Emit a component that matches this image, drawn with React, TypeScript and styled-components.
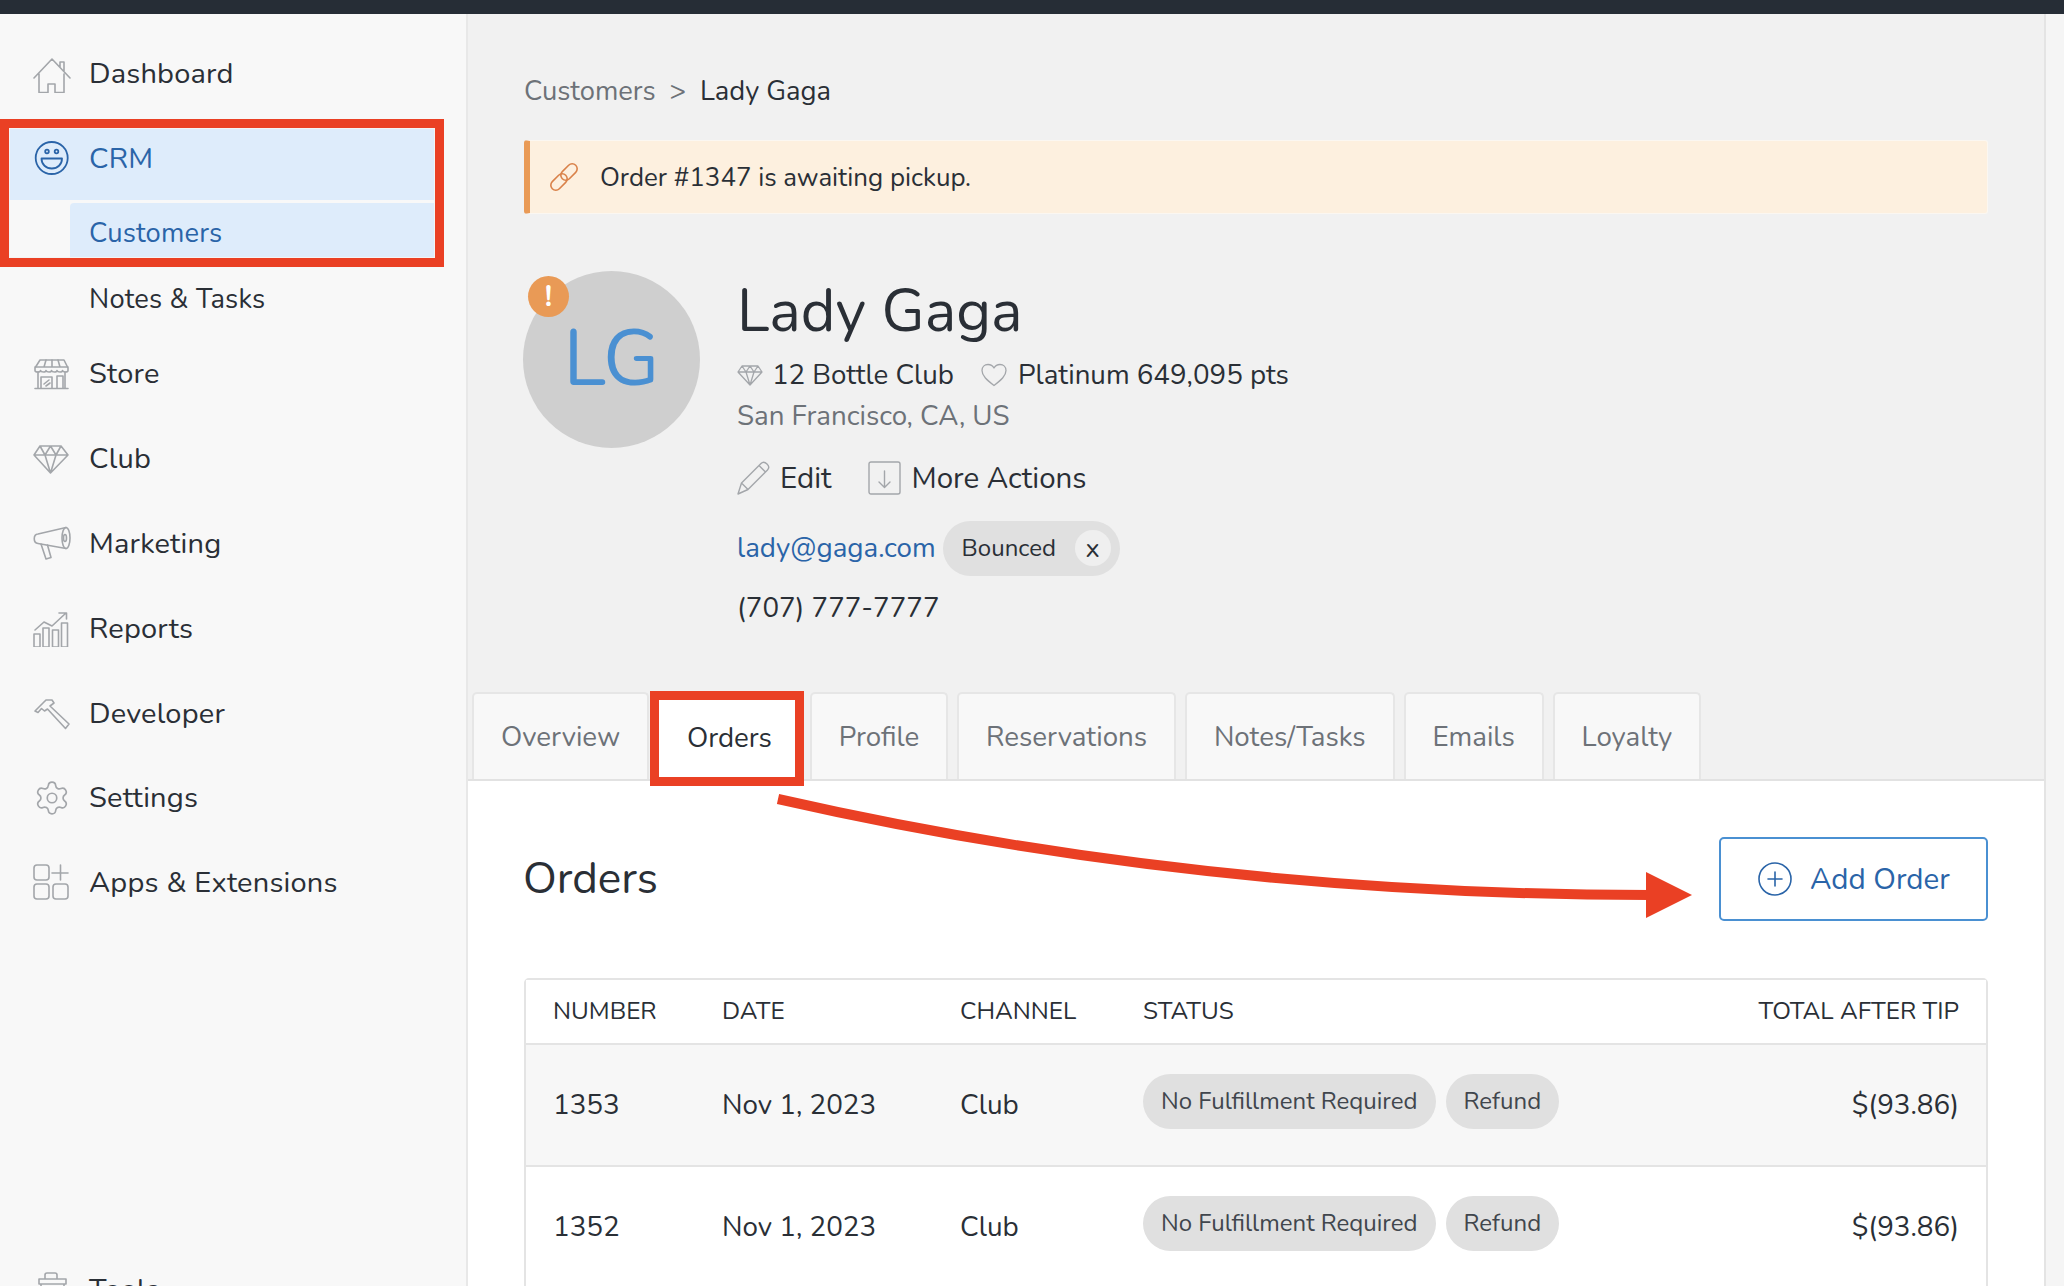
import React from "react";
import styled, { createGlobalStyle } from "styled-components";
import { Settings } from "lucide-react";

const GlobalStyle = createGlobalStyle`
  html, body {
    margin: 0;
    padding: 0;
    height: 100%;
    overflow: hidden;
    background: #f1f1f1;
  }
  * { box-sizing: border-box; }
  body {
    font-family: "Nunito", Lato, "Noto Sans", sans-serif;
    color: #2a2f36;
  }
`;

const Page = styled.div`
  position: relative;
  width: 2064px;
  height: 1286px;
  overflow: hidden;
  display: flex;
  flex-direction: column;
`;
const TopBar = styled.div`
  height: 14px;
  flex: none;
  background: #262d36;
`;
const Body = styled.div`
  flex: 1;
  min-height: 0;
  display: flex;
`;

/* sidebar */
const Sidebar = styled.nav`
  flex: none;
  width: 468px;
  height: 1318px;
  padding-top: 17px;
  background: #f8f8f8;
  border-right: 2px solid #e8e8e8;
  display: flex;
  flex-direction: column;
`;
const NavItem = styled.div<{ $h?: number }>`
  flex: none;
  height: ${(p) => p.$h ?? 84.8}px;
  padding-left: 33px;
  display: flex;
  align-items: center;
  gap: 18px;
  font-size: 29px;
  letter-spacing: 0.2px;
  svg {
    flex: none;
  }
`;
const Group = styled.div`
  position: relative;
  flex: none;
  width: 444px;
  margin-top: 12px;
`;
const GroupHead = styled(NavItem)`
  height: 72px;
  padding-bottom: 12px;
  background: #deecfb;
  color: #2a64a8;
`;
const SubItem = styled.div<{ $active?: boolean }>`
  flex: none;
  margin-left: 70px;
  padding-left: 19px;
  display: flex;
  align-items: center;
  font-size: 27.3px;
  letter-spacing: 0.2px;
  height: ${(p) => (p.$active ? 55 : 73.5)}px;
  margin-top: ${(p) => (p.$active ? 3 : 0)}px;
  padding-top: ${(p) => (p.$active ? 5 : 8)}px;
  border-top-left-radius: 4px;
  background: ${(p) => (p.$active ? "#deecfb" : "transparent")};
  color: ${(p) => (p.$active ? "#2a64a8" : "inherit")};
`;
const RedBox = styled.div`
  position: absolute;
  top: -9px;
  left: 0;
  right: 0;
  bottom: -9px;
  border: 9px solid #ea4024;
  box-shadow: inset 0 0 0 1px #f4f4f4;
  pointer-events: none;
`;
const BottomItem = styled(NavItem)`
  margin-top: auto;
`;

/* main column */
const Main = styled.main`
  flex: none;
  width: 1576px;
  display: flex;
  flex-direction: column;
`;
const Head = styled.header`
  padding: 59px 56px 65px;
`;
const Crumbs = styled.div`
  height: 36px;
  display: flex;
  align-items: center;
  gap: 14px;
  font-size: 27.3px;
  margin-bottom: 31px;
`;
const CrumbLink = styled.span`
  color: #6d7278;
`;
const Alert = styled.div`
  height: 74px;
  padding-left: 19px;
  display: flex;
  align-items: center;
  gap: 21px;
  font-size: 25.9px;
  background: #fdf0df;
  border: 1px solid #fbf7f1;
  border-left: 6px solid #e99a56;
  border-radius: 3px;
  margin-bottom: 57px;
`;
const Profile = styled.section`
  display: flex;
  gap: 37px;
  margin-left: -1px;
`;
const Avatar = styled.div`
  position: relative;
  flex: none;
  width: 177px;
  height: 177px;
  border-radius: 50%;
  background: #cfcfcf;
  color: #4a90d2;
  font-size: 78px;
  display: flex;
  align-items: center;
  justify-content: center;
`;
const AlertDot = styled.span`
  position: absolute;
  top: 5px;
  left: 5px;
  width: 41px;
  height: 41px;
  border-radius: 50%;
  background: #e99a56;
  color: #fff;
  font-size: 30px;
  font-weight: 700;
  display: flex;
  align-items: center;
  justify-content: center;
`;
const Info = styled.div`
  display: flex;
  flex-direction: column;
`;
const Name = styled.h1`
  margin: 11px 0 0;
  font-size: 59.5px;
  line-height: 60px;
  font-weight: 400;
`;
const InfoRow = styled.div<{ $top: number; $muted?: boolean; $size?: number }>`
  margin-top: ${(p) => p.$top}px;
  min-height: 36px;
  display: flex;
  align-items: center;
  font-size: ${(p) => p.$size ?? 27.7}px;
  color: ${(p) => (p.$muted ? "#6d7278" : "inherit")};
`;
const Inline = styled.span<{ $gap: number; $left?: number }>`
  display: inline-flex;
  align-items: center;
  gap: ${(p) => p.$gap}px;
  margin-left: ${(p) => p.$left ?? 0}px;
`;
const Email = styled.a`
  color: #2a64a8;
`;
const BouncedPill = styled.span`
  margin-left: 7px;
  width: 177px;
  height: 55px;
  padding: 0 9px 0 19px;
  border-radius: 28px;
  background: #e0e0e0;
  display: flex;
  align-items: center;
  justify-content: space-between;
  font-size: 24px;
`;
const PillClose = styled.span`
  width: 36px;
  height: 36px;
  border-radius: 50%;
  background: #efefef;
  font-size: 27px;
  display: flex;
  align-items: center;
  justify-content: center;
`;

/* tabs */
const Tabs = styled.div`
  height: 89px;
  padding-left: 4px;
  display: flex;
  gap: 9px;
  border-bottom: 2px solid #e2e2e2;
`;
const Tab = styled.div<{ $active?: boolean }>`
  position: relative;
  padding: 1px 26.9px 0;
  display: flex;
  align-items: center;
  font-size: 27.7px;
  background: ${(p) => (p.$active ? "#fff" : "#f8f8f8")};
  color: ${(p) => (p.$active ? "#2a2f36" : "#6d7278")};
  border: 2px solid ${(p) => (p.$active ? "#fff" : "#e6e6e6")};
  border-bottom: none;
  border-radius: 5px 5px 0 0;
  height: ${(p) => (p.$active ? 89 : 87)}px;
`;
const TabRedBox = styled.span`
  position: absolute;
  top: -3px;
  left: -10px;
  right: -5px;
  bottom: -5px;
  border: 9px solid #ea4024;
  pointer-events: none;
`;

/* orders panel */
const Panel = styled.section`
  flex: 1;
  padding: 56px 56px 0;
  background: #fff;
`;
const PanelHead = styled.div`
  height: 84px;
  display: flex;
  align-items: center;
  justify-content: space-between;
  margin-bottom: 57px;
`;
const PanelTitle = styled.h2`
  margin: 0 0 0 -1px;
  font-size: 44px;
  font-weight: 400;
`;
const AddButton = styled.button`
  width: 269px;
  height: 84px;
  padding: 0 0 0 37px;
  display: flex;
  align-items: center;
  gap: 18px;
  background: #fff;
  border: 2px solid #4a90d2;
  border-radius: 5px;
  color: #2a64a8;
  font-family: inherit;
  font-size: 29.5px;
`;
const TableBox = styled.div`
  border: 2px solid #e4e4e4;
  border-radius: 5px;
`;
const TableRow = styled.div<{ $head?: boolean; $shade?: boolean }>`
  display: grid;
  grid-template-columns: 169px 238px 183px 1fr auto;
  align-items: center;
  height: ${(p) => (p.$head ? 65 : 122)}px;
  padding: 0 27px;
  font-size: ${(p) => (p.$head ? 24.4 : 27.8)}px;
  background: ${(p) => (p.$shade ? "#f7f7f7" : "#fff")};
  border-bottom: 2px solid #e4e4e4;
`;
const StatusCell = styled.div`
  display: flex;
  gap: 10px;
  margin-top: -7px;
`;
const Pill = styled.span`
  height: 55px;
  padding: 0 18px;
  border-radius: 28px;
  background: #e0e0e0;
  font-size: 24px;
  color: #41464d;
  display: flex;
  align-items: center;
`;

const ArrowOverlay = styled.svg`
  position: absolute;
  top: 0;
  left: 0;
  pointer-events: none;
`;
const RightStrip = styled.div`
  flex: 1;
  background: #f5f5f5;
  border-left: 2px solid #e4e4e4;
`;

const Icon: React.FC<{ size?: number; w?: number; h?: number; color?: string; sw?: number; children: React.ReactNode }> = ({
  size = 38,
  w,
  h,
  color = "#a3a6aa",
  sw = 1.6,
  children,
}) => (
  <svg
    width={w ?? size}
    height={h ?? size}
    viewBox={`0 0 ${w ?? size} ${h ?? size}`}
    fill="none"
    stroke={color}
    strokeWidth={sw}
    strokeLinejoin="round"
    strokeLinecap="round"
  >
    {children}
  </svg>
);

const HouseIcon = () => (
  <Icon>
    <path d="M1 23 19 4l18 19M6 19v18.5h9V29h7v8.5h9V19M27 12V7h4v9" />
  </Icon>
);
const SmileIcon = () => (
  <Icon color="#2a64a8" sw={1.8}>
    <circle cx="18.7" cy="19" r="16" />
    <circle cx="14" cy="12.5" r="1.8" />
    <circle cx="23.5" cy="12.5" r="1.8" />
    <path d="M8.5 19.5h20.5c0 6-4.5 10-10.2 10S8.5 25.500 8.500 19.500Z" />
  </Icon>
);
const StoreIcon = () => (
  <Icon>
    <path d="M7 5h24l4 8v2.500c0 2-5 2-5.500 0 0 2-5 2-5.500 0 0 2-5 2-5.500 0 0 2-5 2-5.500 0 0 2-5 2-5.500 0 0 2-5.500 2-5.500 0V13Z" />
    <path d="M2 12h33M13 5l-2 7M19 5v7M25 5l2 7M5 17v16M32 17v16M2 33.500h33" />
    <path d="M8 22h11v11M8 22v11M24 21h6v12M24 21v12M11 29l5-4M13 31l4-3" />
  </Icon>
);
const DiamondIcon = () => (
  <Icon>
    <path d="M7 6h21l7 9-17.500 18L1 15ZM1 15h34M7 6l5 9 5.500 18L23 15l5-9M12 15l5.500-9L23 15" />
  </Icon>
);
const MegaphoneIcon = () => (
  <Icon>
    <path d="M33 3.500 5 10c-5 .5-5 9 0 9.500l28 5" />
    <ellipse cx="33" cy="14" rx="4" ry="10.500" />
    <ellipse cx="32" cy="14" rx="1.500" ry="3.500" />
    <path d="M8 20l5 15 5-1.500-3.500-12.500" />
  </Icon>
);
const ChartIcon = () => (
  <Icon>
    <rect x="1" y="25" width="6" height="13" />
    <rect x="10" y="19" width="6" height="19" />
    <rect x="19.500" y="21" width="6" height="17" />
    <rect x="28.500" y="14" width="6" height="24" />
    <path d="M2 21 11 13l8 4L33 4M26 4h7.500v6" />
  </Icon>
);
const HammerIcon = () => (
  <Icon>
    <path d="M2 17 13 6h6l2 3-4 3 19 18-3.500 4.500L14.500 15l-3 2-3-2.500-3.500 4Z" />
  </Icon>
);
const GridPlusIcon = () => (
  <Icon>
    <rect x="1" y="1" width="15" height="15" rx="3" />
    <rect x="1" y="20" width="15" height="15" rx="3" />
    <rect x="20" y="20" width="15" height="15" rx="3" />
    <path d="M19 9h16M27.500 1v15" />
  </Icon>
);
const ToolboxIcon = () => (
  <Icon>
    <path d="M12 8V4c0-1 1-2 2-2h8c1 0 2 1 2 2v4M6 8h27v5H6ZM8 13v24h23V13" />
  </Icon>
);
const LinkIcon = () => (
  <Icon w={30} h={30} color="#d9824a" sw={1.6}>
    <rect x="15" y="0.500" width="10" height="19" rx="5" transform="rotate(45 20 10)" />
    <rect x="5" y="10.500" width="10" height="19" rx="5" transform="rotate(45 10 20)" />
  </Icon>
);
const SmallDiamond = () => (
  <Icon w={26} h={24} sw={1.3}>
    <path d="M5 3h16l4 6-12 13L1 9ZM1 9h24M5 3l4 6 4 13 4-13 4-6M9 9l4-6 4 6" />
  </Icon>
);
const HeartIcon = () => (
  <Icon w={26} h={24} sw={1.3}>
    <path d="M13 22.500C6 17 1 13 1 7.500 1 4 3.500 1.500 7 1.500c2.500 0 4.800 1.300 6 3.500 1.200-2.200 3.500-3.500 6-3.500 3.500 0 6 2.500 6 6 0 5.500-5 9.500-12 15Z" />
  </Icon>
);
const PencilIcon = () => (
  <Icon w={33} h={34} sw={1.4}>
    <path d="M1 33l3.500-11L24 2.500c2-2 4-1.500 6 .5s2.500 4 .5 6L11 28.500ZM4.500 22 11 28.500M22 4.500 28.500 11" />
  </Icon>
);
const DownBoxIcon = () => (
  <Icon w={33} h={34} sw={1.4}>
    <rect x="1" y="1" width="31" height="32" rx="2" />
    <path d="M16.500 10v16M11 21l5.500 5.500L22 21" />
  </Icon>
);
const PlusCircleIcon = () => (
  <Icon w={34} h={34} color="#2a64a8" sw={1.6}>
    <circle cx="17" cy="17" r="16" />
    <path d="M17 10v14M10 17h14" />
  </Icon>
);

const navTop = [
  { label: "Store", icon: <StoreIcon /> },
  { label: "Club", icon: <DiamondIcon /> },
  { label: "Marketing", icon: <MegaphoneIcon /> },
  { label: "Reports", icon: <ChartIcon /> },
  { label: "Developer", icon: <HammerIcon /> },
  { label: "Settings", icon: <Settings size={38} strokeWidth={1.05} color="#a3a6aa" /> },
  { label: "Apps & Extensions", icon: <GridPlusIcon /> },
];
const tabs = ["Overview", "Orders", "Profile", "Reservations", "Notes/Tasks", "Emails", "Loyalty"];
const orders = [
  { number: "1353", shade: true },
  { number: "1352", shade: false },
];

export default function App() {
  return (
    <Page>
      <GlobalStyle />
      <TopBar />
      <Body>
        <Sidebar>
          <NavItem $h={85}>
            <HouseIcon />
            Dashboard
          </NavItem>
          <Group>
            <GroupHead>
              <SmileIcon />
              CRM
            </GroupHead>
            <SubItem $active>Customers</SubItem>
            <RedBox />
          </Group>
          <SubItem>Notes &amp; Tasks</SubItem>
          {navTop.map((item) => (
            <NavItem key={item.label}>
              {item.icon}
              {item.label}
            </NavItem>
          ))}
          <BottomItem>
            <ToolboxIcon />
            Tools
          </BottomItem>
        </Sidebar>

        <Main>
          <Head>
            <Crumbs>
              <CrumbLink>Customers</CrumbLink>
              <CrumbLink>&gt;</CrumbLink>
              <span>Lady Gaga</span>
            </Crumbs>
            <Alert>
              <LinkIcon />
              Order #1347 is awaiting pickup.
            </Alert>
            <Profile>
              <Avatar>
                LG
                <AlertDot>!</AlertDot>
              </Avatar>
              <Info>
                <Name>Lady Gaga</Name>
                <InfoRow $top={14}>
                  <Inline $gap={9}>
                    <SmallDiamond />
                    12 Bottle Club
                  </Inline>
                  <Inline $gap={11} $left={27}>
                    <HeartIcon />
                    Platinum 649,095 pts
                  </Inline>
                </InfoRow>
                <InfoRow $top={3} $muted>
                  San Francisco, CA, US
                </InfoRow>
                <InfoRow $top={22.5} $size={29.5}>
                  <Inline $gap={10}>
                    <PencilIcon />
                    Edit
                  </Inline>
                  <Inline $gap={10} $left={37}>
                    <DownBoxIcon />
                    More Actions
                  </Inline>
                </InfoRow>
                <InfoRow $top={23} $size={27.7}>
                  <Email>lady@gaga.com</Email>
                  <BouncedPill>
                    Bounced
                    <PillClose>x</PillClose>
                  </BouncedPill>
                </InfoRow>
                <InfoRow $top={13}>(707) 777-7777</InfoRow>
              </Info>
            </Profile>
          </Head>

          <Tabs>
            {tabs.map((tab) => (
              <Tab key={tab} $active={tab === "Orders"}>
                {tab}
                {tab === "Orders" && <TabRedBox />}
              </Tab>
            ))}
          </Tabs>

          <Panel>
            <PanelHead>
              <PanelTitle>Orders</PanelTitle>
              <AddButton>
                <PlusCircleIcon />
                Add Order
              </AddButton>
            </PanelHead>
            <TableBox>
              <TableRow $head>
                <div>NUMBER</div>
                <div>DATE</div>
                <div>CHANNEL</div>
                <div>STATUS</div>
                <div>TOTAL AFTER TIP</div>
              </TableRow>
              {orders.map((order) => (
                <TableRow key={order.number} $shade={order.shade}>
                  <div>{order.number}</div>
                  <div>Nov 1, 2023</div>
                  <div>Club</div>
                  <StatusCell>
                    <Pill>No Fulfillment Required</Pill>
                    <Pill>Refund</Pill>
                  </StatusCell>
                  <div>$(93.86)</div>
                </TableRow>
              ))}
            </TableBox>
          </Panel>
        </Main>
        <RightStrip />
      </Body>

      <ArrowOverlay width="2064" height="1286" viewBox="0 0 2064 1286">
        <path d="M778 799Q1200 895 1650 895" fill="none" stroke="#ea4024" strokeWidth="10" />
        <polygon points="1646,872 1692,895 1646,918" fill="#ea4024" />
      </ArrowOverlay>
    </Page>
  );
}
